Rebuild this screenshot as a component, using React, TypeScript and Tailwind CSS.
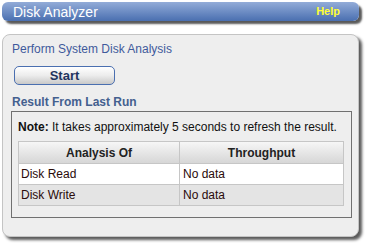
export default function App() {
  const rows = [
    { name: "Disk Read", value: "No data" },
    { name: "Disk Write", value: "No data" },
  ];

  return (
    <div className="w-[369px] h-[248px] bg-white font-['Liberation_Sans',Arial,sans-serif] overflow-hidden">
      <div className="pt-[2px] pl-[2px]">
        <div className="w-[357px] h-[19px] rounded-[6px] bg-gradient-to-b from-[#93acd8] to-[#4a6fb0] shadow-[3px_3px_2px_rgba(0,0,0,0.65)] flex items-center justify-between pl-[11px] pr-[19px]">
          <span className="text-[14px] leading-none text-white">Disk Analyzer</span>
          <span className="text-[11px] font-bold leading-none text-[#ffff33]">Help</span>
        </div>
      </div>

      <div className="mt-[13px] ml-[2px] w-[357px] h-[203px] rounded-[8px] border border-[#c4c4c4] bg-[#eeeeee] shadow-[3px_3px_3px_rgba(0,0,0,0.65)] pl-[8px] pt-[7px]">
        <p className="pl-[1px] text-[12px] leading-[14px] text-[#3f5a9c]">Perform System Disk Analysis</p>

        <button className="mt-[10px] ml-[3px] w-[101px] h-[19px] rounded-[5px] border border-[#4a6fb0] bg-gradient-to-b from-[#ffffff] via-[#ececec] to-[#c9c9c9] text-[13px] font-bold leading-none text-[#1f3560] flex items-center justify-center">
          Start
        </button>

        <p className="mt-[10px] pl-[1px] text-[12px] leading-[14px] font-bold text-[#44608f]">Result From Last Run</p>

        <div className="mt-[2px] w-[341px] h-[107px] border border-[#707070] px-[6px] pt-[8px]">
          <p className="text-[12px] leading-[14px] text-[#111]">
            <span className="font-bold">Note:</span> It takes approximately 5 seconds to refresh the result.
          </p>

          <table className="mt-[7px] w-[326px] border-collapse text-[12px] text-[#2a0a0a]">
            <thead>
              <tr className="h-[22px] bg-gradient-to-b from-[#f6f6f6] to-[#d5d5d5]">
                <th className="w-[161px] border border-[#c6c6c6] font-bold text-center text-[#222]">Analysis Of</th>
                <th className="border border-[#c6c6c6] font-bold text-center text-[#222]">Throughput</th>
              </tr>
            </thead>
            <tbody>
              {rows.map((r, i) => (
                <tr key={r.name} className={i % 2 === 0 ? "h-[21px] bg-white" : "h-[21px] bg-[#e4e4e4]"}>
                  <td className="border border-[#c6c6c6] pl-[2px]">{r.name}</td>
                  <td className="border border-[#c6c6c6] pl-[3px]">{r.value}</td>
                </tr>
              ))}
            </tbody>
          </table>
        </div>
      </div>
    </div>
  );
}
